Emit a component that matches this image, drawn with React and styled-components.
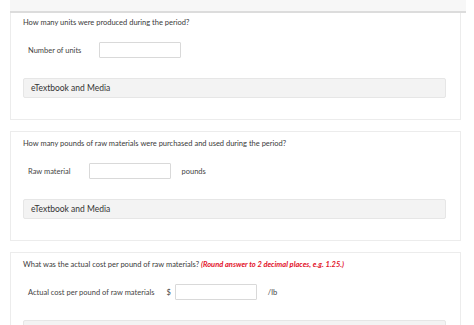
import React from "react";
import styled, { createGlobalStyle } from "styled-components";

const Global = createGlobalStyle`
  html, body { margin: 0; padding: 0; background: #fff; }
  body { font-family: Lato, "Open Sans", "Liberation Sans", sans-serif; color: #333; }
`;

const Page = styled.div`
  width: 474px;
  height: 325px;
  overflow: hidden;
  background: #fff;
`;

const TopBar = styled.div`
  height: 11px;
  margin-left: 10px;
  margin-right: 8px;
  background: #f7f7f7;
  border-bottom: 2px solid #dcdcdc;
`;

const Stack = styled.div`
  display: flex;
  flex-direction: column;
  gap: 11px;
  padding-left: 10px;
  width: 451px;
`;

const Card = styled.section`
  border: 1px solid #ececec;
  border-top: ${(p) => (p.$first ? "none" : "1px solid #ececec")};
  padding: ${(p) => (p.$first ? "5px" : "7px")} 14px 21px 12px;
  background: #fff;
`;

const Question = styled.p`
  margin: 0;
  font-size: 7.5px;
  line-height: 10px;
  color: #3a3a3a;
`;

const Hint = styled.em`
  color: #e2122a;
  font-weight: 700;
`;

const Row = styled.div`
  display: flex;
  align-items: center;
  margin: 14px 0 20px 5px;
  height: 16px;
`;

const Label = styled.span`
  font-size: 7.5px;
  color: #444;
  margin-right: ${(p) => p.$gap}px;
`;

const Currency = styled.span`
  font-size: 7.5px;
  color: #444;
  margin-right: 4px;
`;

const Input = styled.input`
  box-sizing: border-box;
  width: 82px;
  height: 16px;
  border: 1px solid #d9d9d9;
  border-radius: 1px;
  background: #fff;
  padding: 0 3px;
  outline: none;
`;

const Unit = styled.span`
  font-size: 7.5px;
  color: #444;
  margin-left: 11px;
`;

const MediaBar = styled.div`
  height: 20px;
  box-sizing: border-box;
  display: flex;
  align-items: center;
  padding-left: 7px;
  background: #f3f3f3;
  border: 1px solid #e6e6e6;
  border-radius: 2px;
  font-size: 8.5px;
  color: #333;
`;

const questions = [
  {
    q: "How many units were produced during the period?",
    label: "Number of units",
    gap: 18,
  },
  {
    q: "How many pounds of raw materials were purchased and used during the period?",
    label: "Raw material",
    gap: 18,
    unit: "pounds",
  },
  {
    q: "What was the actual cost per pound of raw materials?",
    hint: "(Round answer to 2 decimal places, e.g. 1.25.)",
    label: "Actual cost per pound of raw materials",
    gap: 12,
    currency: "$",
    unit: "/lb",
  },
];

export default function App() {
  return (
    <Page>
      <Global />
      <TopBar />
      <Stack>
        {questions.map((item, i) => (
          <Card key={i} $first={i === 0}>
            <Question>
              {item.q}
              {item.hint && (
                <>
                  {" "}
                  <Hint>{item.hint}</Hint>
                </>
              )}
            </Question>
            <Row>
              <Label $gap={item.gap}>{item.label}</Label>
              {item.currency && <Currency>{item.currency}</Currency>}
              <Input type="text" />
              {item.unit && <Unit>{item.unit}</Unit>}
            </Row>
            <MediaBar>eTextbook and Media</MediaBar>
          </Card>
        ))}
      </Stack>
    </Page>
  );
}
